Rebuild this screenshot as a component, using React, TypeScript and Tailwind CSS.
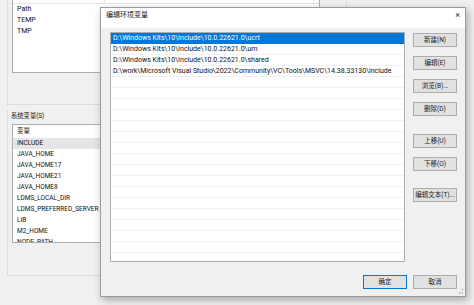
import React from "react";

const userVars = ["Path", "TEMP", "TMP"];
const sysVars = [
  "INCLUDE",
  "JAVA_HOME",
  "JAVA_HOME17",
  "JAVA_HOME21",
  "JAVA_HOME8",
  "LDMS_LOCAL_DIR",
  "LDMS_PREFERRED_SERVER",
  "LIB",
  "M2_HOME",
  "NODE_PATH",
];
const paths = [
  "D:\\Windows Kits\\10\\Include\\10.0.22621.0\\ucrt",
  "D:\\Windows Kits\\10\\Include\\10.0.22621.0\\um",
  "D:\\Windows Kits\\10\\Include\\10.0.22621.0\\shared",
  "D:\\work\\Microsoft Visual Studio\\2022\\Community\\VC\\Tools\\MSVC\\14.38.33130\\include",
];

function Btn({ label, primary, className = "" }: { label: string; primary?: boolean; className?: string }) {
  return (
    <div
      className={
        "w-[44px] h-[14px] flex items-center justify-center bg-[#e1e1e1] border text-[6.5px] text-[#222] " +
        (primary ? "border-[#0078d7]" : "border-[#adadad]") +
        " " +
        className
      }
    >
      {label}
    </div>
  );
}

export default function App() {
  const rows = Array.from({ length: 21 }, (_, i) => paths[i] ?? "");
  return (
    <div className="relative w-[474px] h-[305px] overflow-hidden bg-[#f0f0f0] text-[7px] leading-none text-[#111] font-['Roboto','Noto_Sans_CJK_SC',sans-serif]">
      {/* background window: user variables group */}
      <div className="mt-[-40px] ml-[7px] w-[340px] h-[145px] border border-[#dcdcdc] pt-[31px] pl-[4px]">
        <div className="w-[308px] h-[81px] bg-white border border-[#adadad]">
          <div className="h-[11px] flex border-b border-[#e5e5e5]">
            <div className="w-[92px] border-r border-[#e5e5e5]" />
            <div className="w-[209px] border-r border-[#e5e5e5]" />
          </div>
          {userVars.map((v) => (
            <div key={v} className="h-[11px] flex items-center pl-[4px]">
              {v}
            </div>
          ))}
        </div>
      </div>
      {/* system variables group */}
      <div className="mt-[5px] ml-[7px] w-[340px] h-[166px] border-x border-b border-[#dcdcdc] pt-[2px] pl-[3px]">
        <div className="h-[8px] flex items-center text-[6.3px]">系统变量(S)</div>
        <div className="mt-[4px] ml-[1px] w-[308px] h-[119px] bg-white border border-[#adadad] overflow-hidden text-[6.5px]">
          <div className="h-[13px] flex items-center pl-[4px]">变量</div>
          {sysVars.map((v, i) => (
            <div
              key={v}
              className={"h-[11px] flex items-center pl-[4px] " + (i === 0 ? "bg-[#e5e5e5]" : "")}
            >
              {v}
            </div>
          ))}
        </div>
      </div>

      {/* dialog */}
      <div className="absolute left-[100px] top-[7px] w-[366px] h-[290px] bg-[#f0f0f0] border border-[#9a9a9a] shadow-[2px_3px_8px_rgba(0,0,0,0.3)] flex flex-col">
        <div className="h-[20px] bg-white flex items-center justify-between pl-[5px] pr-[5px] pb-[6px]">
          <span className="text-[7px]">编辑环境变量</span>
          <span className="text-[9px] text-[#333]">×</span>
        </div>
        <div className="flex mt-[4px] ml-[9px]">
          <div className="w-[295px] h-[230px] bg-white border border-[#adadad] overflow-hidden">
            {rows.map((r, i) => (
              <div
                key={i}
                className={
                  "h-[11px] flex items-center pl-[2px] whitespace-nowrap " +
                  (i === 0 ? "bg-[#0078d7] text-white" : "border-b border-[#f0f0f0]")
                }
              >
                {r}
              </div>
            ))}
          </div>
          <div className="ml-[8px] flex flex-col">
            <Btn label="新建(N)" className="mt-[1px]" />
            <Btn label="编辑(E)" className="mt-[9px]" />
            <Btn label="浏览(B)..." className="mt-[9px]" />
            <Btn label="删除(D)" className="mt-[9px]" />
            <Btn label="上移(U)" className="mt-[18px]" />
            <Btn label="下移(O)" className="mt-[9px]" />
            <Btn label="编辑文本(T)..." className="mt-[17px]" />
          </div>
        </div>
        <div className="flex justify-end gap-[6px] pr-[8px] mt-[13px]">
          <Btn label="确定" primary />
          <Btn label="取消" />
        </div>
        <div className="absolute right-[2px] bottom-[2px] w-[6px] h-[6px] grid grid-cols-3 gap-[1px] opacity-50">
          <span />
          <span />
          <span className="bg-[#999]" />
          <span />
          <span className="bg-[#999]" />
          <span className="bg-[#999]" />
        </div>
      </div>
    </div>
  );
}
